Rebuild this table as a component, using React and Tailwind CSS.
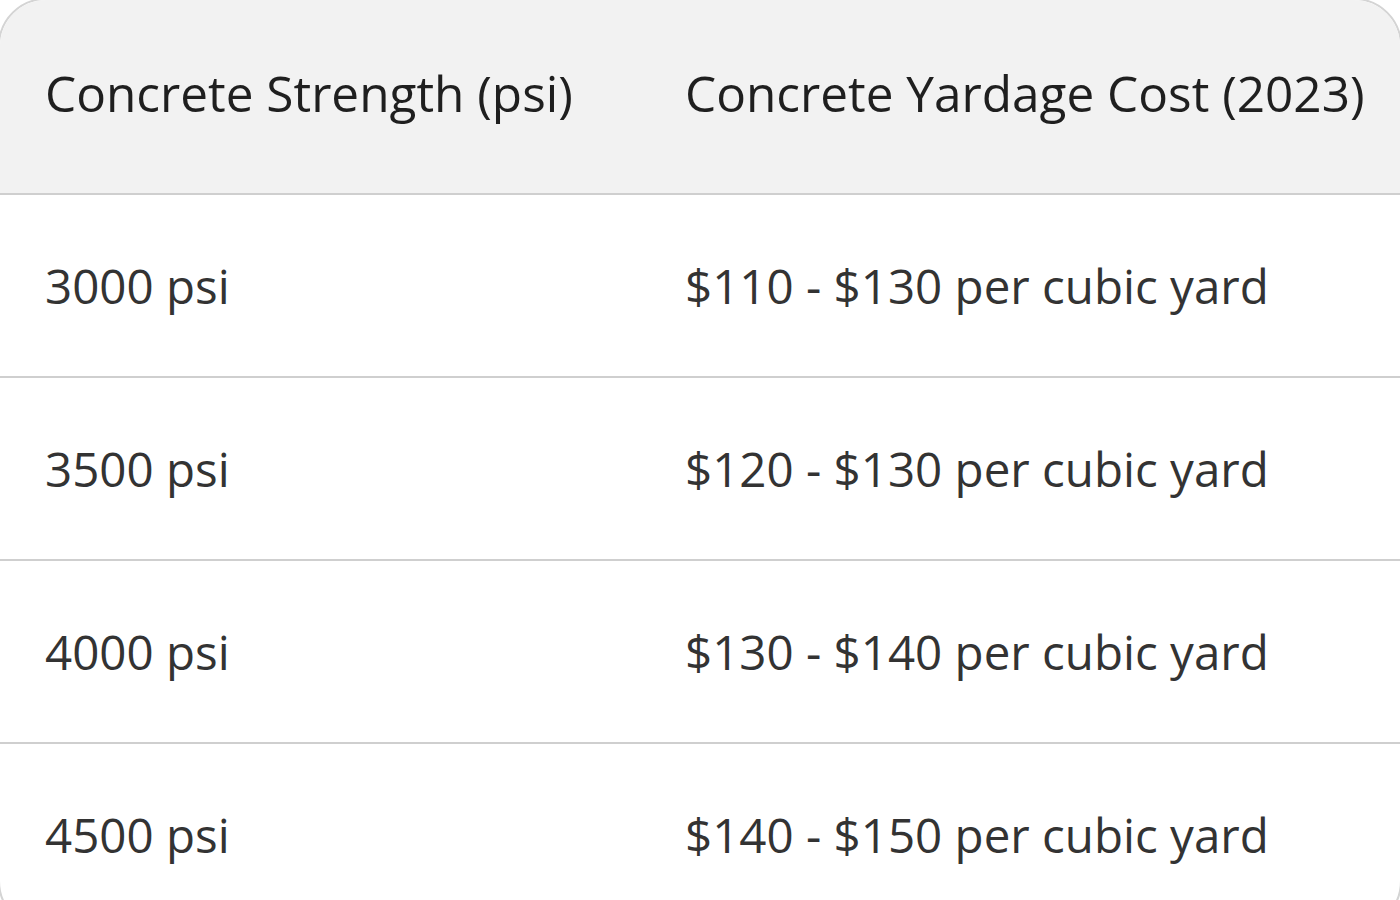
const ROWS = [
  ['3000 psi', '$110 - $130 per cubic yard'],
  ['3500 psi', '$120 - $130 per cubic yard'],
  ['4000 psi', '$130 - $140 per cubic yard'],
  ['4500 psi', '$140 - $150 per cubic yard'],
]

export default function App() {
  return (
    <div className="w-[1400px] h-[900px] overflow-hidden bg-white" style={{ fontFamily: '"Open Sans", "Liberation Sans", sans-serif' }}>
      <div className="-mx-[2px] -mt-[2px] border-2 border-[#d4d4d4] rounded-[48px] overflow-hidden">
        <table className="w-full border-collapse table-fixed">
          <thead>
            <tr className="bg-[#f2f2f2] h-[194px] border-b-2 border-[#cfcfcf]">
              <th className="w-[685px] pl-[45px] pb-[6px] text-left font-normal text-[49.5px] text-[#1f1f1f]">Concrete Strength (psi)</th>
              <th className="text-left pb-[6px] font-normal text-[49.5px] text-[#1f1f1f] whitespace-nowrap">Concrete Yardage Cost (2023)</th>
            </tr>
          </thead>
          <tbody>
            {ROWS.map(([psi, cost]) => (
              <tr key={psi} className="h-[183px] border-b-2 border-[#cfcfcf]">
                <td className="pl-[45px] text-[47.5px] text-[#333333]">{psi}</td>
                <td className="text-[47.5px] text-[#333333] whitespace-nowrap">{cost}</td>
              </tr>
            ))}
          </tbody>
        </table>
      </div>
    </div>
  )
}
